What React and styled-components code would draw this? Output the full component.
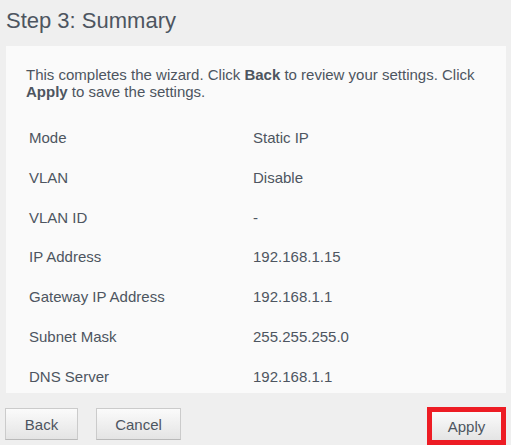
import React from "react";
import styled, { createGlobalStyle } from "styled-components";

const GlobalStyle = createGlobalStyle`
  html, body {
    margin: 0;
    padding: 0;
    background: #efefef;
  }
  body {
    font-family: "Liberation Sans", Arial, sans-serif;
    color: #4d5560;
  }
`;

const Page = styled.div`
  width: 511px;
  height: 445px;
  overflow: hidden;
  display: flex;
  flex-direction: column;
`;

const Title = styled.h1`
  margin: 0;
  padding: 8px 0 0 6px;
  height: 46px;
  box-sizing: border-box;
  font-size: 22px;
  line-height: 26px;
  font-weight: normal;
  color: #4d5560;
`;

const Panel = styled.div`
  margin: 0 5px 0 6px;
  background: #fafafa;
  padding: 20.5px 20px 8.5px 20px;
  display: flex;
  flex-direction: column;
`;

const Intro = styled.p`
  margin: 0 0 29px 0;
  font-size: 15px;
  line-height: 17px;
`;

const Rows = styled.div`
  display: flex;
  flex-direction: column;
  gap: 22.7px;
`;

const Row = styled.div`
  display: grid;
  grid-template-columns: 224px 1fr;
  padding-left: 3px;
  font-size: 15px;
  line-height: 17px;
`;

const Footer = styled.div`
  display: flex;
  align-items: flex-start;
  padding: 14px 5px 0 5px;
  gap: 18px;
`;

const Button = styled.button`
  height: 32px;
  width: ${(p) => p.$w}px;
  margin-top: 1px;
  border: 1px solid #cbcbcb;
  border-bottom-color: #b9b9b9;
  background: linear-gradient(#fbfbfb, #e4e4e4);
  font-family: "Liberation Sans", Arial, sans-serif;
  font-size: 15px;
  color: #4d5560;
  padding: 0;
`;

const Highlight = styled.div`
  margin-left: auto;
  border: 5px solid #ed1c24;
  display: flex;
`;

const ApplyButton = styled(Button)`
  margin-top: 0;
  height: 28px;
  border: none;
`;

const rows = [
  ["Mode", "Static IP"],
  ["VLAN", "Disable"],
  ["VLAN ID", "-"],
  ["IP Address", "192.168.1.15"],
  ["Gateway IP Address", "192.168.1.1"],
  ["Subnet Mask", "255.255.255.0"],
  ["DNS Server", "192.168.1.1"],
];

export default function App() {
  return (
    <Page>
      <GlobalStyle />
      <Title>Step 3: Summary</Title>
      <Panel>
        <Intro>
          This completes the wizard. Click <b>Back</b> to review your settings. Click{" "}
          <b>Apply</b> to save the settings.
        </Intro>
        <Rows>
          {rows.map(([label, value]) => (
            <Row key={label}>
              <span>{label}</span>
              <span>{value}</span>
            </Row>
          ))}
        </Rows>
      </Panel>
      <Footer>
        <Button $w={73}>Back</Button>
        <Button $w={85}>Cancel</Button>
        <Highlight>
          <ApplyButton $w={69}>Apply</ApplyButton>
        </Highlight>
      </Footer>
    </Page>
  );
}
